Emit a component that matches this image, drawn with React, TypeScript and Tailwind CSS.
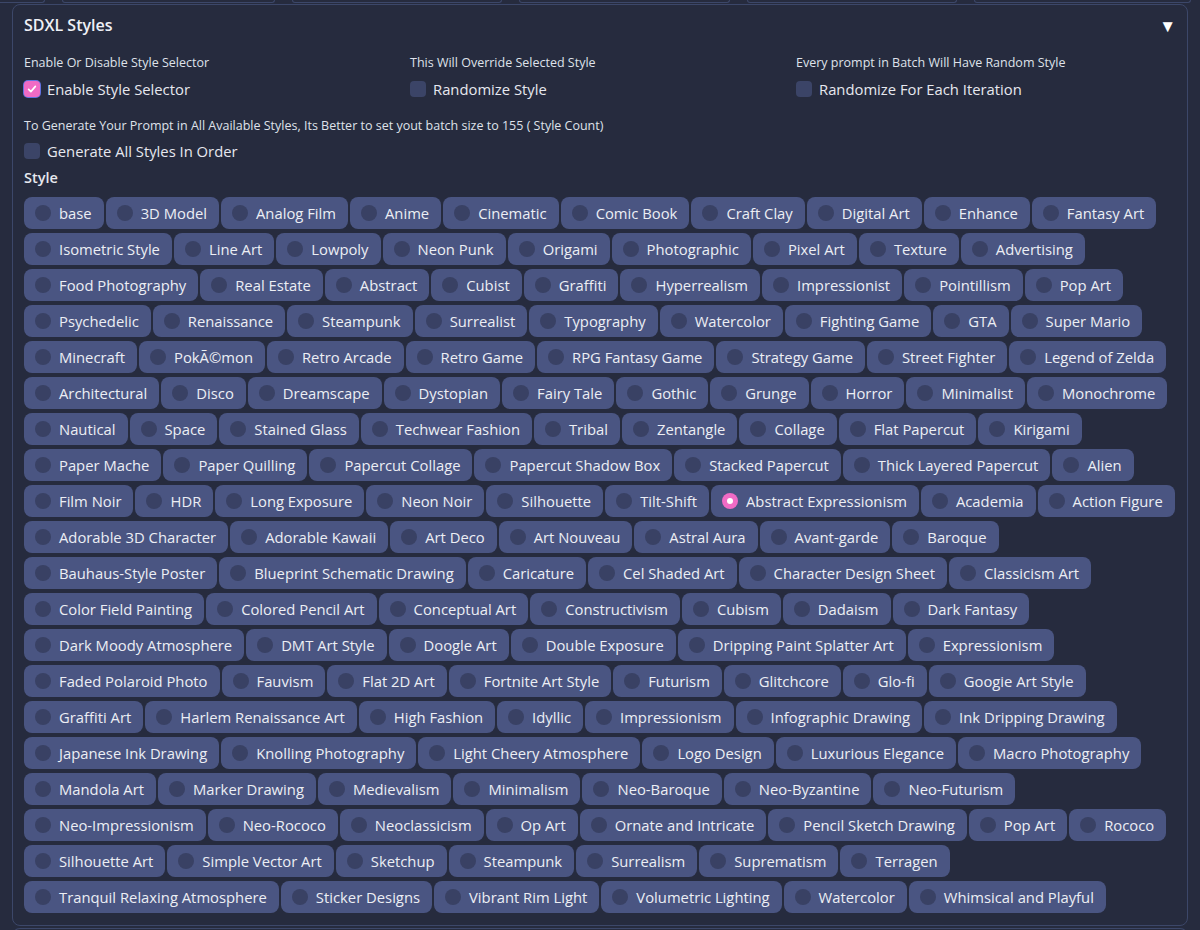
import React, { useState } from 'react';

// Style chips, grouped the way they wrap in the panel
const styleRows: string[][] = [
  ['base', '3D Model', 'Analog Film', 'Anime', 'Cinematic', 'Comic Book', 'Craft Clay', 'Digital Art', 'Enhance', 'Fantasy Art'],
  ['Isometric Style', 'Line Art', 'Lowpoly', 'Neon Punk', 'Origami', 'Photographic', 'Pixel Art', 'Texture', 'Advertising'],
  ['Food Photography', 'Real Estate', 'Abstract', 'Cubist', 'Graffiti', 'Hyperrealism', 'Impressionist', 'Pointillism', 'Pop Art'],
  ['Psychedelic', 'Renaissance', 'Steampunk', 'Surrealist', 'Typography', 'Watercolor', 'Fighting Game', 'GTA', 'Super Mario'],
  ['Minecraft', 'PokÃ©mon', 'Retro Arcade', 'Retro Game', 'RPG Fantasy Game', 'Strategy Game', 'Street Fighter', 'Legend of Zelda'],
  ['Architectural', 'Disco', 'Dreamscape', 'Dystopian', 'Fairy Tale', 'Gothic', 'Grunge', 'Horror', 'Minimalist', 'Monochrome'],
  ['Nautical', 'Space', 'Stained Glass', 'Techwear Fashion', 'Tribal', 'Zentangle', 'Collage', 'Flat Papercut', 'Kirigami'],
  ['Paper Mache', 'Paper Quilling', 'Papercut Collage', 'Papercut Shadow Box', 'Stacked Papercut', 'Thick Layered Papercut', 'Alien'],
  ['Film Noir', 'HDR', 'Long Exposure', 'Neon Noir', 'Silhouette', 'Tilt-Shift', 'Abstract Expressionism', 'Academia', 'Action Figure'],
  ['Adorable 3D Character', 'Adorable Kawaii', 'Art Deco', 'Art Nouveau', 'Astral Aura', 'Avant-garde', 'Baroque'],
  ['Bauhaus-Style Poster', 'Blueprint Schematic Drawing', 'Caricature', 'Cel Shaded Art', 'Character Design Sheet', 'Classicism Art'],
  ['Color Field Painting', 'Colored Pencil Art', 'Conceptual Art', 'Constructivism', 'Cubism', 'Dadaism', 'Dark Fantasy'],
  ['Dark Moody Atmosphere', 'DMT Art Style', 'Doogle Art', 'Double Exposure', 'Dripping Paint Splatter Art', 'Expressionism'],
  ['Faded Polaroid Photo', 'Fauvism', 'Flat 2D Art', 'Fortnite Art Style', 'Futurism', 'Glitchcore', 'Glo-fi', 'Googie Art Style'],
  ['Graffiti Art', 'Harlem Renaissance Art', 'High Fashion', 'Idyllic', 'Impressionism', 'Infographic Drawing', 'Ink Dripping Drawing'],
  ['Japanese Ink Drawing', 'Knolling Photography', 'Light Cheery Atmosphere', 'Logo Design', 'Luxurious Elegance', 'Macro Photography'],
  ['Mandola Art', 'Marker Drawing', 'Medievalism', 'Minimalism', 'Neo-Baroque', 'Neo-Byzantine', 'Neo-Futurism'],
  ['Neo-Impressionism', 'Neo-Rococo', 'Neoclassicism', 'Op Art', 'Ornate and Intricate', 'Pencil Sketch Drawing', 'Pop Art', 'Rococo'],
  ['Silhouette Art', 'Simple Vector Art', 'Sketchup', 'Steampunk', 'Surrealism', 'Suprematism', 'Terragen'],
  ['Tranquil Relaxing Atmosphere', 'Sticker Designs', 'Vibrant Rim Light', 'Volumetric Lighting', 'Watercolor', 'Whimsical and Playful'],
];

const Checkbox: React.FC<{ checked: boolean; label: string; onChange: () => void }> = ({ checked, label, onChange }) => (
  <label className="flex items-center gap-[7px] h-[22px] cursor-pointer" onClick={onChange}>
    {checked ? (
      <span className="w-4 h-4 rounded-[4px] bg-[#f06bc5] ring-1 ring-[#6272e0] flex items-center justify-center">
        <svg viewBox="0 0 16 16" className="w-3 h-3" fill="none" stroke="white" strokeWidth="2.2" strokeLinecap="round" strokeLinejoin="round">
          <path d="M3.5 8.5l3 3 6-7" />
        </svg>
      </span>
    ) : (
      <span className="w-4 h-4 rounded-[4px] bg-[#3b4467]" />
    )}
    <span className="text-[14.8px] text-[#e6e8ef] font-medium">{label}</span>
  </label>
);

const App: React.FC = () => {
  const [enabled, setEnabled] = useState(true);
  const [randomize, setRandomize] = useState(false);
  const [perIteration, setPerIteration] = useState(false);
  const [allInOrder, setAllInOrder] = useState(false);
  const [selected, setSelected] = useState('Abstract Expressionism');

  return (
    <div className="min-h-[930px] bg-[#262b3e] text-[#e6e8ef] overflow-hidden" style={{ fontFamily: '"Open Sans", "Liberation Sans", sans-serif' }}>
      {/* bottom edge of the block above */}
      <div className="flex h-[3px] gap-[17px]">
        <div className="w-[45px] border-b border-r border-[#3c4769] rounded-br-md" />
        <div className="w-[213px] border-b border-x border-[#3c4769] rounded-b-md" />
        <div className="w-[210px] border-b border-x border-[#3c4769] rounded-b-md" />
        <div className="w-[211px] border-b border-x border-[#3c4769] rounded-b-md" />
        <div className="w-[210px] border-b border-x border-[#3c4769] rounded-b-md" />
        <div className="w-[217px] border-b border-x border-[#3c4769] rounded-b-md" />
      </div>

      {/* SDXL Styles panel */}
      <div className="mx-3 mt-px border border-[#3c4769] rounded-lg px-[11px] pb-[12px]">
        <div className="flex items-center justify-between pt-2 h-[32px]">
          <h2 className="text-[16px] font-semibold text-[#eef0f6]">SDXL Styles</h2>
          <span className="text-[17px] text-white leading-none">▼</span>
        </div>

        <div className="grid grid-cols-3 gap-x-[6px] mt-[18px]">
          <div>
            <p className="text-[12.5px] leading-4 font-medium text-[#dfe2ea] mb-[7px]">Enable Or Disable Style Selector</p>
            <Checkbox checked={enabled} label="Enable Style Selector" onChange={() => setEnabled(!enabled)} />
          </div>
          <div>
            <p className="text-[12.5px] leading-4 font-medium text-[#dfe2ea] mb-[7px]">This Will Override Selected Style</p>
            <Checkbox checked={randomize} label="Randomize Style" onChange={() => setRandomize(!randomize)} />
          </div>
          <div>
            <p className="text-[12.5px] leading-4 font-medium text-[#dfe2ea] mb-[7px]">Every prompt in Batch Will Have Random Style</p>
            <Checkbox checked={perIteration} label="Randomize For Each Iteration" onChange={() => setPerIteration(!perIteration)} />
          </div>
        </div>

        <p className="text-[12.5px] leading-4 font-medium text-[#dfe2ea] mt-[18px] mb-[6px]">
          To Generate Your Prompt in All Available Styles, Its Better to set yout batch size to 155 ( Style Count)
        </p>
        <Checkbox checked={allInOrder} label="Generate All Styles In Order" onChange={() => setAllInOrder(!allInOrder)} />

        <p className="text-[14.5px] leading-5 font-semibold text-[#e6e8ef] mt-[6px] mb-[9px]">Style</p>

        {/* radio chips */}
        <div className="flex flex-col gap-1">
          {styleRows.map((row, i) => (
            <div key={i} className="flex gap-[2px]">
              {row.map((name) => {
                const isOn = selected === name;
                return (
                  <button
                    key={name}
                    onClick={() => setSelected(name)}
                    className="h-8 flex items-center gap-2 pl-[11px] pr-3 rounded-lg bg-[#4a5582] text-[14.8px] font-medium text-[#eceef4] whitespace-nowrap"
                  >
                    {isOn ? (
                      <span className="w-4 h-4 rounded-full bg-[#f06bc5] flex items-center justify-center">
                        <span className="w-[6px] h-[6px] rounded-full bg-white" />
                      </span>
                    ) : (
                      <span className="w-4 h-4 rounded-full bg-[#394164]" />
                    )}
                    {name}
                  </button>
                );
              })}
            </div>
          ))}
        </div>
      </div>

      {/* top edge of the next panel */}
      <div className="mx-3 mt-[2px] h-4 border-t border-x border-[#3c4769] rounded-t-lg" />
    </div>
  );
};

export default App;
